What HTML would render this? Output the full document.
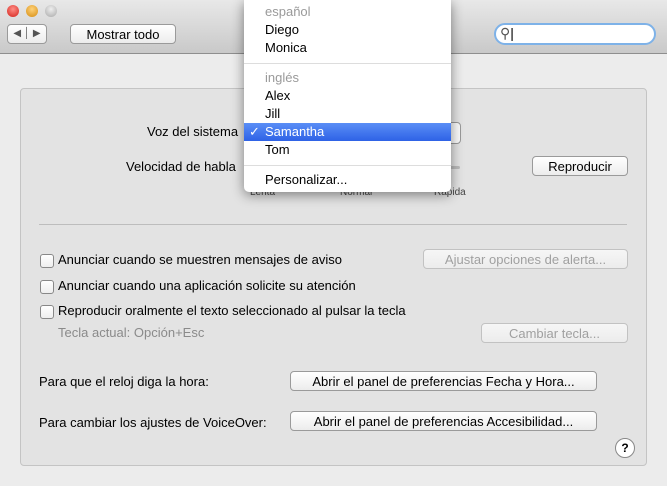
<!DOCTYPE html><html><head><style>
body{margin:0;width:667px;height:486px;background:#ececec;font-family:"Liberation Sans",sans-serif;font-size:13px;color:#000;position:relative;overflow:hidden}
.a{position:absolute;white-space:nowrap}
.tb{position:absolute;left:0;top:0;width:667px;height:53px;background:linear-gradient(#e8e8e8,#c9c9c9);border-bottom:1px solid #8e8e8e}
.btn{position:absolute;height:20px;border:1px solid #9a9a9a;border-radius:4px;background:linear-gradient(#fff,#ececec);text-align:center;line-height:20px;box-sizing:border-box;font-size:13px}
.dis{color:#a0a0a0;border-color:#c2c2c2;background:linear-gradient(#f6f6f6,#ececec)}
.cb{position:absolute;width:12px;height:12px;border:1px solid #888;border-radius:3px;background:linear-gradient(#fff,#eee)}
.dot{position:absolute;width:12px;height:12px;border-radius:50%;top:5px}
.m{position:absolute;left:244px;top:0;width:207px;height:192px;background:#fff;border-radius:0 0 5px 5px;box-shadow:0 3px 12px rgba(0,0,0,.45)}
.mi{position:absolute;left:21px}
.sep{position:absolute;left:0;width:207px;height:1px;background:#ddd}
</style></head><body>
<div class="tb"></div>
<div class="dot" style="left:7px;background:radial-gradient(circle at 50% 35%,#ff8d85,#d3221b)"></div>
<div class="dot" style="left:26px;background:radial-gradient(circle at 50% 35%,#ffd27a,#d58c10)"></div>
<div class="dot" style="left:45px;background:radial-gradient(circle at 50% 35%,#eee,#a9a9a9)"></div>
<div class="btn" style="left:7px;top:24px;width:40px;color:#555;font-size:10px;line-height:18px">◀ │ ▶</div>
<div class="btn" style="left:70px;top:24px;width:106px">Mostrar todo</div>
<div class="a" style="left:494px;top:23px;width:162px;height:22px;border-radius:12px;border:2px solid #7eb2e8;background:#fff;box-sizing:border-box"></div>
<div class="a" style="left:500px;top:25px;font-size:14px;color:#555">⚲<span style="color:#000;font-size:14px">|</span></div>
<div class="a" style="left:20px;top:88px;width:627px;height:378px;background:#e3e3e3;border:1px solid #c4c4c4;border-radius:4px;box-sizing:border-box"></div>
<div class="a" style="left:147px;top:124px">Voz del sistema</div>
<div class="a" style="left:440px;top:122px;width:19px;height:20px;border:1px solid #9a9a9a;border-radius:4px;background:#fafafa"></div>
<div class="a" style="left:126px;top:159px">Velocidad de habla</div>
<div class="a" style="left:440px;top:166px;width:20px;height:3px;background:#bbb;border-radius:2px"></div>
<div class="a" style="left:250px;top:187px;font-size:10px;color:#444">Lenta</div>
<div class="a" style="left:340px;top:187px;font-size:10px;color:#444">Normal</div>
<div class="a" style="left:434px;top:187px;font-size:10px;color:#444">Rápida</div>
<div class="btn" style="left:532px;top:156px;width:96px">Reproducir</div>
<div class="a" style="left:39px;top:224px;width:588px;height:1px;background:#bdbdbd"></div>
<div class="cb" style="left:40px;top:254px"></div><div class="a" style="left:58px;top:252px">Anunciar cuando se muestren mensajes de aviso</div>
<div class="btn dis" style="left:423px;top:249px;width:205px">Ajustar opciones de alerta...</div>
<div class="cb" style="left:40px;top:280px"></div><div class="a" style="left:58px;top:278px">Anunciar cuando una aplicación solicite su atención</div>
<div class="cb" style="left:40px;top:305px"></div><div class="a" style="left:58px;top:303px">Reproducir oralmente el texto seleccionado al pulsar la tecla</div>
<div class="a" style="left:58px;top:325px;color:#8a8a8a">Tecla actual: Opción+Esc</div>
<div class="btn dis" style="left:481px;top:323px;width:147px">Cambiar tecla...</div>
<div class="a" style="left:39px;top:374px">Para que el reloj diga la hora:</div>
<div class="btn" style="left:290px;top:371px;width:307px">Abrir el panel de preferencias Fecha y Hora...</div>
<div class="a" style="left:39px;top:415px">Para cambiar los ajustes de VoiceOver:</div>
<div class="btn" style="left:290px;top:411px;width:307px">Abrir el panel de preferencias Accesibilidad...</div>
<div class="a" style="left:615px;top:438px;width:18px;height:18px;border:1px solid #888;border-radius:50%;background:#fff;text-align:center;line-height:18px;font-weight:bold;font-size:12px">?</div>
<div class="m">
<div class="mi" style="top:4px;color:#9a9a9a">español</div>
<div class="mi" style="top:22px">Diego</div>
<div class="mi" style="top:40px">Monica</div>
<div class="sep" style="top:63px"></div>
<div class="mi" style="top:70px;color:#9a9a9a">inglés</div>
<div class="mi" style="top:88px">Alex</div>
<div class="mi" style="top:106px">Jill</div>
<div class="a" style="left:0;top:123px;width:207px;height:18px;background:linear-gradient(#5a8ef6,#2e62e6)"></div>
<div class="a" style="left:5px;top:124px;color:#fff">✓</div>
<div class="mi" style="top:124px;color:#fff">Samantha</div>
<div class="mi" style="top:142px">Tom</div>
<div class="sep" style="top:165px"></div>
<div class="mi" style="top:172px">Personalizar...</div>
</div>
</body></html>
